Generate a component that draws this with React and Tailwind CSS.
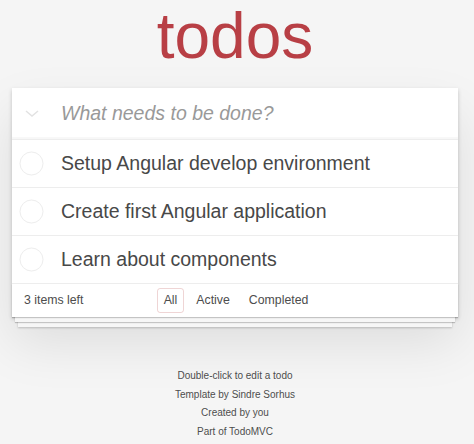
import React from 'react';

const todos = [
  'Setup Angular develop environment',
  'Create first Angular application',
  'Learn about components',
];

function Circle() {
  return (
    <svg width="25" height="25" viewBox="0 0 25 25" className="shrink-0">
      <circle cx="12.5" cy="12.5" r="11.5" fill="none" stroke="#ededed" strokeWidth="1" />
    </svg>
  );
}

export default function App() {
  return (
    <div
      className="min-h-[444px] bg-[#f5f5f5] text-[#4d4d4d]"
      style={{ fontFamily: '"Liberation Sans", Arial, sans-serif' }}
    >
      <div className="ml-[12px] w-[446px]">
        <h1 className="pt-[4px] text-center text-[64px] leading-[64px] font-thin text-[#b83f45]">
          todos
        </h1>

        <div className="mt-[20px] relative bg-white shadow-[0_2px_4px_rgba(0,0,0,0.2),0_25px_50px_rgba(0,0,0,0.1)]">
          {/* new todo */}
          <div className="flex h-[52px] items-center border-b border-[#ededed] shadow-[inset_0_-2px_1px_rgba(0,0,0,0.03)]">
            <div className="flex w-[49px] pl-[13px]">
              <svg width="14" height="7" viewBox="0 0 14 7">
                <path d="M1 1 L7 6 L13 1" fill="none" stroke="#e2e2e2" strokeWidth="1.5" />
              </svg>
            </div>
            <span className="pt-[1px] text-[19.5px] italic text-[#999]">What needs to be done?</span>
          </div>

          {/* list */}
          <ul>
            {todos.map((t) => (
              <li key={t} className="flex h-[48px] items-center border-b border-[#ededed]">
                <div className="flex w-[49px] pl-[7px]">
                  <Circle />
                </div>
                <span className="pt-[1px] text-[19.5px] text-[#484848]">{t}</span>
              </li>
            ))}
          </ul>

          {/* footer */}
          <div className="relative grid h-[33px] grid-cols-[1fr_auto_1fr] items-center px-[12px] text-[12.3px] text-[#4d4d4d]">
            <div className="pointer-events-none absolute inset-x-0 bottom-0 h-[33px] shadow-[0_1px_1px_rgba(0,0,0,0.2),0_8px_0_-3px_#f6f6f6,0_9px_1px_-3px_rgba(0,0,0,0.2),0_16px_0_-6px_#f6f6f6,0_17px_2px_-6px_rgba(0,0,0,0.2)]" />
            <span className="relative">3 items left</span>
            <div className="relative ml-[2px] flex items-center gap-[5px]">
              <span className="rounded-[3px] border border-[rgba(175,47,47,0.2)] px-[6px] py-[2px]">All</span>
              <span className="border border-transparent px-[6px] py-[2px]">Active</span>
              <span className="border border-transparent px-[6px] py-[2px]">Completed</span>
            </div>
            <span />
          </div>
        </div>

        <footer className="mt-[50px] text-center text-[10px] leading-[18.7px] text-[#4d4d4d] [text-shadow:0_1px_0_rgba(255,255,255,0.5)]">
          <p>Double-click to edit a todo</p>
          <p>Template by Sindre Sorhus</p>
          <p>Created by you</p>
          <p>Part of TodoMVC</p>
        </footer>
      </div>
    </div>
  );
}
